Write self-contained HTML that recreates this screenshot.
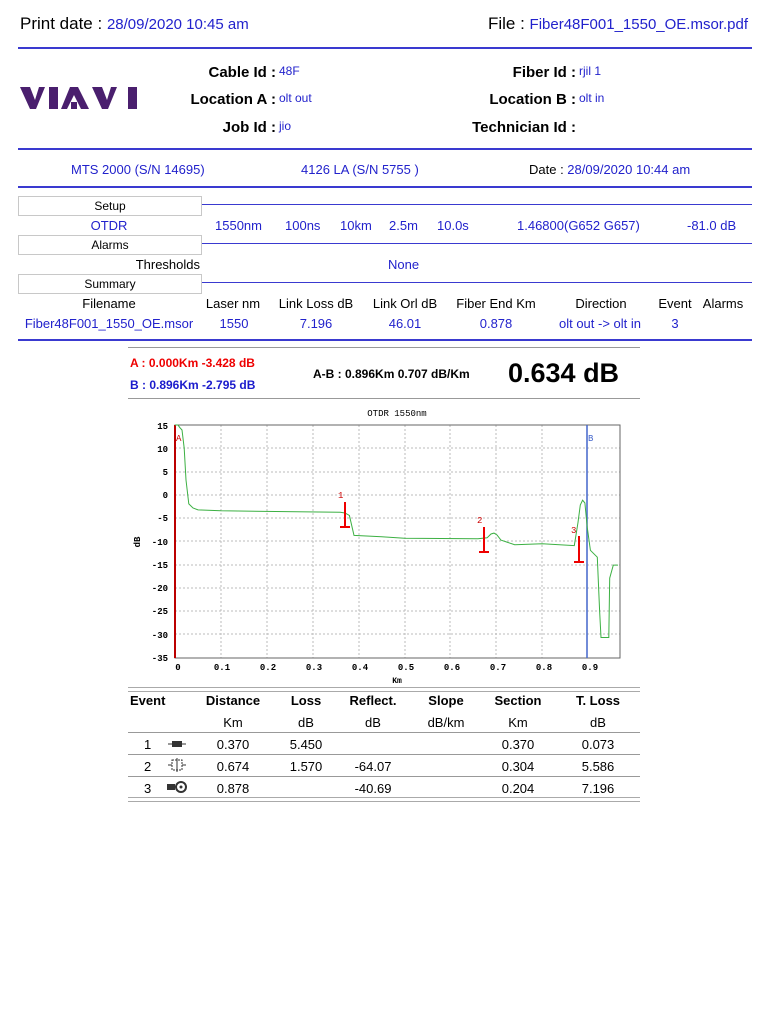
<!DOCTYPE html>
<html><head><meta charset="utf-8"><style>
body{margin:0;width:768px;height:1024px;background:#fff;position:relative;font-family:"Liberation Sans",sans-serif;overflow:hidden}
.a{position:absolute;white-space:nowrap}
.b{color:#2222cc}
.k{color:#000}
.hl{position:absolute;height:1px;background:#3a3ad0}
.box{position:absolute;left:18px;width:182px;height:18px;border:1px solid #c8c8c8;font-size:12px;text-align:center;line-height:18px}
.c{text-align:center;transform:translateX(-50%)}
.r{text-align:right;transform:translateX(-100%)}
.f13{font-size:13px}
.bold{font-weight:bold}
</style></head><body>
<div class="a" style="left:20px;top:14px;font-size:17px">Print date : <span class="b" style="font-size:15px">28/09/2020 10:45 am</span></div>
<div class="a r" style="left:748px;top:14px;font-size:17px">File : <span class="b" style="font-size:15px">Fiber48F001_1550_OE.msor.pdf</span></div>
<div class="hl" style="left:18px;width:734px;top:47px;height:2px"></div>

<svg class="a" style="left:20px;top:87px" width="118" height="23" viewBox="0 0 118 23">
<g fill="#4a1f6e">
<polygon points="0,0 10,0 15,13 19,0 25,0 16,22 10,22"/>
<rect x="29" y="0" width="9" height="22"/>
<polygon points="50,0 58,0 69,22 61,22 54,8 47,22 41,22"/>
<rect x="51" y="15" width="6" height="7"/>
<polygon points="72,0 82,0 87,13 91,0 97,0 88,22 82,22"/>
<rect x="108" y="0" width="9" height="22"/>
</g></svg>

<div class="a r bold" style="left:276px;top:64px;font-size:15px">Cable Id :</div>
<div class="a b" style="left:279px;top:64px;font-size:12px">48F</div>
<div class="a r bold" style="left:276px;top:91px;font-size:15px">Location A :</div>
<div class="a b" style="left:279px;top:91px;font-size:12px">olt out</div>
<div class="a r bold" style="left:276px;top:119px;font-size:15px">Job Id :</div>
<div class="a b" style="left:279px;top:119px;font-size:12px">jio</div>
<div class="a r bold" style="left:576px;top:64px;font-size:15px">Fiber Id :</div>
<div class="a b" style="left:579px;top:64px;font-size:12px">rjil 1</div>
<div class="a r bold" style="left:576px;top:91px;font-size:15px">Location B :</div>
<div class="a b" style="left:579px;top:91px;font-size:12px">olt in</div>
<div class="a r bold" style="left:576px;top:119px;font-size:15px">Technician Id :</div>

<div class="hl" style="left:18px;width:734px;top:148px;height:2px"></div>
<div class="a b f13" style="left:71px;top:162px">MTS 2000 (S/N 14695)</div>
<div class="a b f13" style="left:301px;top:162px">4126 LA (S/N 5755 )</div>
<div class="a f13" style="left:529px;top:162px">Date : <span class="b">28/09/2020 10:44 am</span></div>
<div class="hl" style="left:18px;width:734px;top:186px;height:2px"></div>

<div class="box" style="top:196px">Setup</div>
<div class="hl" style="left:202px;width:550px;top:204px"></div>
<div class="a b f13 c" style="left:109px;top:218px">OTDR</div>
<div class="a b f13" style="left:215px;top:218px">1550nm</div>
<div class="a b f13" style="left:285px;top:218px">100ns</div>
<div class="a b f13" style="left:340px;top:218px">10km</div>
<div class="a b f13" style="left:389px;top:218px">2.5m</div>
<div class="a b f13" style="left:437px;top:218px">10.0s</div>
<div class="a b f13" style="left:517px;top:218px">1.46800(G652 G657)</div>
<div class="a b f13" style="left:687px;top:218px">-81.0 dB</div>
<div class="box" style="top:235px">Alarms</div>
<div class="hl" style="left:202px;width:550px;top:243px"></div>
<div class="a f13 r" style="left:200px;top:257px">Thresholds</div>
<div class="a b f13" style="left:388px;top:257px">None</div>
<div class="box" style="top:274px">Summary</div>
<div class="hl" style="left:202px;width:550px;top:282px"></div>
<div class="a f13 c" style="left:109px;top:296px">Filename</div>
<div class="a f13 c" style="left:233px;top:296px">Laser nm</div>
<div class="a f13 c" style="left:316px;top:296px">Link Loss dB</div>
<div class="a f13 c" style="left:405px;top:296px">Link Orl dB</div>
<div class="a f13 c" style="left:496px;top:296px">Fiber End Km</div>
<div class="a f13 c" style="left:601px;top:296px">Direction</div>
<div class="a f13 c" style="left:675px;top:296px">Event</div>
<div class="a f13 c" style="left:723px;top:296px">Alarms</div>
<div class="a b f13 c" style="left:109px;top:316px">Fiber48F001_1550_OE.msor</div>
<div class="a b f13 c" style="left:234px;top:316px">1550</div>
<div class="a b f13 c" style="left:316px;top:316px">7.196</div>
<div class="a b f13 c" style="left:405px;top:316px">46.01</div>
<div class="a b f13 c" style="left:496px;top:316px">0.878</div>
<div class="a b f13 c" style="left:600px;top:316px">olt out -&gt; olt in</div>
<div class="a b f13 c" style="left:675px;top:316px">3</div>
<div class="hl" style="left:18px;width:734px;top:339px;height:2px"></div>

<div class="a" style="left:128px;top:347px;width:512px;height:1px;background:#999"></div>
<div class="a bold" style="left:130px;top:356px;font-size:12px;color:#e00">A : 0.000Km -3.428 dB</div>
<div class="a bold" style="left:130px;top:378px;font-size:12px;color:#1a1acc">B : 0.896Km -2.795 dB</div>
<div class="a bold" style="left:313px;top:367px;font-size:12px">A-B : 0.896Km 0.707 dB/Km</div>
<div class="a bold" style="left:508px;top:358px;font-size:27px">0.634 dB</div>
<div class="a" style="left:128px;top:398px;width:512px;height:1px;background:#999"></div>

<svg class="a" style="left:120px;top:400px" width="520" height="290" viewBox="120 400 520 290" font-family="Liberation Mono, monospace">
<text x="397" y="416" font-size="9" text-anchor="middle">OTDR 1550nm</text>
<g stroke="#bbb" stroke-dasharray="2,2" stroke-width="1">
<line x1="221" y1="425" x2="221" y2="658"/><line x1="267" y1="425" x2="267" y2="658"/><line x1="313" y1="425" x2="313" y2="658"/><line x1="359" y1="425" x2="359" y2="658"/><line x1="405" y1="425" x2="405" y2="658"/><line x1="450" y1="425" x2="450" y2="658"/><line x1="496" y1="425" x2="496" y2="658"/><line x1="542" y1="425" x2="542" y2="658"/>
<line x1="175" y1="448" x2="620" y2="448"/><line x1="175" y1="472" x2="620" y2="472"/><line x1="175" y1="495" x2="620" y2="495"/><line x1="175" y1="518" x2="620" y2="518"/><line x1="175" y1="541" x2="620" y2="541"/><line x1="175" y1="565" x2="620" y2="565"/><line x1="175" y1="588" x2="620" y2="588"/><line x1="175" y1="611" x2="620" y2="611"/><line x1="175" y1="634" x2="620" y2="634"/>
</g>
<rect x="175" y="425" width="445" height="233" fill="none" stroke="#666" stroke-width="1"/>
<g font-size="9" text-anchor="end" font-weight="bold">
<text x="168" y="429">15</text><text x="168" y="452">10</text><text x="168" y="475">5</text><text x="168" y="498">0</text><text x="168" y="521">-5</text><text x="168" y="545">-10</text><text x="168" y="568">-15</text><text x="168" y="591">-20</text><text x="168" y="614">-25</text><text x="168" y="638">-30</text><text x="168" y="661">-35</text>
</g>
<g font-size="9" text-anchor="middle" font-weight="bold">
<text x="178" y="670">0</text><text x="222" y="670">0.1</text><text x="268" y="670">0.2</text><text x="314" y="670">0.3</text><text x="360" y="670">0.4</text><text x="406" y="670">0.5</text><text x="452" y="670">0.6</text><text x="498" y="670">0.7</text><text x="544" y="670">0.8</text><text x="590" y="670">0.9</text>
<text x="397" y="683" font-size="8">Km</text>
</g>
<text x="140" y="542" font-size="9" font-weight="bold" transform="rotate(-90 140 542)" text-anchor="middle">dB</text>
<line x1="175" y1="425" x2="175" y2="658" stroke="#b00" stroke-width="2"/>
<text x="176" y="441" font-size="9" fill="#c00">A</text>
<line x1="587" y1="425" x2="587" y2="658" stroke="#4466cc" stroke-width="1.5"/>
<text x="588" y="441" font-size="9" fill="#4466cc">B</text>
<polyline fill="none" stroke="#3cb043" stroke-width="1" points="175,425 178,425 179.6,427.3 182,430 184.2,448.2 186,480 188.8,503.9 193,508 198,509.9 220.9,510.8 340.2,512.2 345,513 349.4,515.5 354,535.4 381.6,536.8 404.5,538.2 477.9,538.7 487.1,537.8 491,534 494,533.1 497,535 500.9,540.1 514.7,544.7 542.2,543.8 574.3,545.6 578,522.4 580.3,505 582.6,500.2 584.9,503 587.2,527.1 590.4,550.3 597.3,557.2 599.6,610.6 601,637.5 608.8,637.5 609.7,578.1 613.3,565.1 618,565.1"/>
<g stroke="#e00" stroke-width="2" fill="#e00" font-size="9">
<line x1="345" y1="502" x2="345" y2="527"/><line x1="340" y1="527" x2="350" y2="527"/>
<line x1="484" y1="527" x2="484" y2="552"/><line x1="479" y1="552" x2="489" y2="552"/>
<line x1="579" y1="536" x2="579" y2="562"/><line x1="574" y1="562" x2="584" y2="562"/>
</g>
<g fill="#c00" font-size="9" stroke="none"><text x="338" y="498">1</text><text x="477" y="523">2</text><text x="571" y="533">3</text></g>
</svg>

<div class="a" style="left:128px;top:687px;width:512px;height:3px;border-top:1px solid #aaa;border-bottom:1px solid #aaa"></div>
<div class="a bold f13" style="left:130px;top:693px">Event</div>
<div class="a bold f13 c" style="left:233px;top:693px">Distance</div>
<div class="a bold f13 c" style="left:306px;top:693px">Loss</div>
<div class="a bold f13 c" style="left:373px;top:693px">Reflect.</div>
<div class="a bold f13 c" style="left:446px;top:693px">Slope</div>
<div class="a bold f13 c" style="left:518px;top:693px">Section</div>
<div class="a bold f13 c" style="left:598px;top:693px">T. Loss</div>
<div class="a f13 c" style="left:233px;top:715px">Km</div>
<div class="a f13 c" style="left:306px;top:715px">dB</div>
<div class="a f13 c" style="left:373px;top:715px">dB</div>
<div class="a f13 c" style="left:446px;top:715px">dB/km</div>
<div class="a f13 c" style="left:518px;top:715px">Km</div>
<div class="a f13 c" style="left:598px;top:715px">dB</div>
<div class="a" style="left:128px;top:732px;width:512px;height:1px;background:#999"></div>
<div class="a f13" style="left:144px;top:737px">1</div>
<svg class="a" style="left:167px;top:738px" width="20" height="12"><line x1="1" y1="6" x2="19" y2="6" stroke="#333"/><rect x="5" y="3" width="10" height="6" fill="#333"/></svg>
<div class="a f13 c" style="left:233px;top:737px">0.370</div>
<div class="a f13 c" style="left:306px;top:737px">5.450</div>
<div class="a f13 c" style="left:518px;top:737px">0.370</div>
<div class="a f13 c" style="left:598px;top:737px">0.073</div>
<div class="a" style="left:128px;top:754px;width:512px;height:1px;background:#999"></div>
<div class="a f13" style="left:144px;top:759px">2</div>
<svg class="a" style="left:167px;top:757px" width="20" height="16"><line x1="1" y1="8" x2="19" y2="8" stroke="#333"/><rect x="5" y="3" width="10" height="10" fill="#fff" stroke="#333" stroke-dasharray="2,1"/><line x1="10" y1="1" x2="10" y2="15" stroke="#333"/></svg>
<div class="a f13 c" style="left:233px;top:759px">0.674</div>
<div class="a f13 c" style="left:306px;top:759px">1.570</div>
<div class="a f13 c" style="left:373px;top:759px">-64.07</div>
<div class="a f13 c" style="left:518px;top:759px">0.304</div>
<div class="a f13 c" style="left:598px;top:759px">5.586</div>
<div class="a" style="left:128px;top:776px;width:512px;height:1px;background:#999"></div>
<div class="a f13" style="left:144px;top:781px">3</div>
<svg class="a" style="left:166px;top:780px" width="22" height="14"><rect x="1" y="4" width="8" height="6" fill="#333"/><circle cx="15" cy="7" r="5" fill="#fff" stroke="#333" stroke-width="2"/><circle cx="15" cy="7" r="1.5" fill="#333"/></svg>
<div class="a f13 c" style="left:233px;top:781px">0.878</div>
<div class="a f13 c" style="left:373px;top:781px">-40.69</div>
<div class="a f13 c" style="left:518px;top:781px">0.204</div>
<div class="a f13 c" style="left:598px;top:781px">7.196</div>
<div class="a" style="left:128px;top:797px;width:512px;height:3px;border-top:1px solid #aaa;border-bottom:1px solid #aaa"></div>
</body></html>
